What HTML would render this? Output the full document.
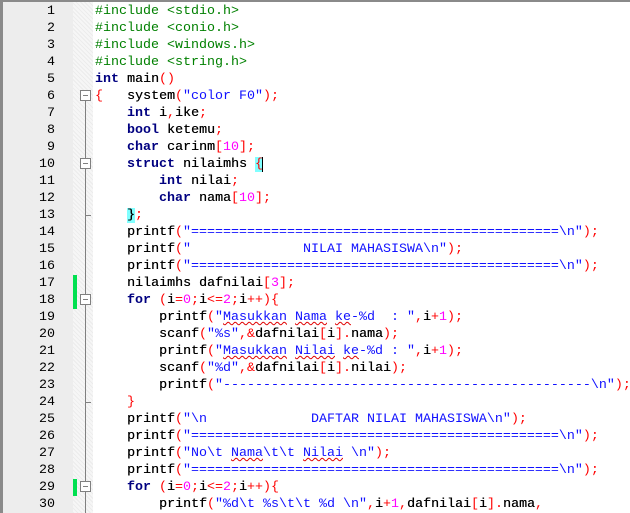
<!DOCTYPE html>
<html><head><meta charset="utf-8"><style>
html,body{margin:0;padding:0;background:#fff;width:630px;height:513px;overflow:hidden;position:relative}
.top{position:absolute;left:0;top:0;width:630px;height:2px;background:#8a8a8a}
.left{position:absolute;left:0;top:0;width:3px;height:513px;background:#8a8a8a}
.num{position:absolute;left:3px;top:2px;width:70px;height:511px;background:#ededed}
.fold{position:absolute;left:73px;top:2px;width:20px;height:511px;background:#f6f6f6;background-image:repeating-linear-gradient(45deg,#ececec 0 1px,transparent 1px 3px)}
pre{margin:0;font-family:"Liberation Mono",monospace;font-size:13.33px;line-height:17px;tab-size:4;-moz-tab-size:4;white-space:pre}
.nums{position:absolute;left:3px;top:3px;width:52px;text-align:right;color:#000}
.code{position:absolute;left:95px;top:3px;color:#000;text-shadow:0.3px 0 0 #000}
.k{color:#000080;font-weight:bold;text-shadow:none}
.s{color:#1010ff;text-shadow:none}
.o{color:#ff0000;text-shadow:none}
.n{color:#ff00ff;text-shadow:none}
.p{color:#008000;text-shadow:none}
.w{text-decoration:underline wavy #e00000;text-decoration-thickness:1px}
.hl{background:#80ffff}
.g{position:absolute;left:73px;width:4px;background:#00e050}
.vl{position:absolute;left:85px;width:1px;background:#808080}
.box{position:absolute;left:80px;width:9px;height:9px;border:1px solid #808080;background:#fff}
.box:after{content:"";position:absolute;left:2px;top:4px;width:5px;height:1px;background:#808080}
.tick{position:absolute;left:85px;width:6px;height:1px;background:#808080}
</style></head><body>
<div class="num"></div><div class="fold"></div>
<div class="top"></div><div class="left"></div>
<div class="g" style="top:275px;height:34px"></div>
<div class="g" style="top:479px;height:17px"></div>
<div class="vl" style="top:91px;height:422px"></div>
<div class="tick" style="top:215px"></div>
<div class="tick" style="top:402px"></div>
<div class="box" style="top:90px"></div>
<div class="box" style="top:158px"></div>
<div class="box" style="top:294px"></div>
<div class="box" style="top:481px"></div>
<pre class="nums">1
2
3
4
5
6
7
8
9
10
11
12
13
14
15
16
17
18
19
20
21
22
23
24
25
26
27
28
29
30</pre>
<pre class="code"><span class="p">#include &lt;stdio.h&gt;</span>
<span class="p">#include &lt;conio.h&gt;</span>
<span class="p">#include &lt;windows.h&gt;</span>
<span class="p">#include &lt;string.h&gt;</span>
<span class="k">int</span> main<span class="o">()</span>
<span class="o">{</span>	system<span class="o">(</span><span class="s">"color F0"</span><span class="o">);</span>
	<span class="k">int</span> i<span class="o">,</span>ike<span class="o">;</span>
	<span class="k">bool</span> ketemu<span class="o">;</span>
	<span class="k">char</span> carinm<span class="o">[</span><span class="n">10</span><span class="o">];</span>
	<span class="k">struct</span> nilaimhs <span class="o hl">{</span><span style="border-left:1px solid #000;margin-left:-1px"></span>
		<span class="k">int</span> nilai<span class="o">;</span>
		<span class="k">char</span> nama<span class="o">[</span><span class="n">10</span><span class="o">];</span>
	<span class="hl">}</span><span class="o">;</span>
	printf<span class="o">(</span><span class="s">"==============================================\n"</span><span class="o">);</span>
	printf<span class="o">(</span><span class="s">"              NILAI MAHASISWA\n"</span><span class="o">);</span>
	printf<span class="o">(</span><span class="s">"==============================================\n"</span><span class="o">);</span>
	nilaimhs dafnilai<span class="o">[</span><span class="n">3</span><span class="o">];</span>
	<span class="k">for</span> <span class="o">(</span>i<span class="o">=</span><span class="n">0</span><span class="o">;</span>i<span class="o">&lt;=</span><span class="n">2</span><span class="o">;</span>i<span class="o">++){</span>
		printf<span class="o">(</span><span class="s">"<span class="w">Masukkan</span> <span class="w">Nama</span> <span class="w">ke</span>-%d  : "</span><span class="o">,</span>i<span class="o">+</span><span class="n">1</span><span class="o">);</span>
		scanf<span class="o">(</span><span class="s">"%s"</span><span class="o">,&amp;</span>dafnilai<span class="o">[</span>i<span class="o">].</span>nama<span class="o">);</span>
		printf<span class="o">(</span><span class="s">"<span class="w">Masukkan</span> <span class="w">Nilai</span> <span class="w">ke</span>-%d : "</span><span class="o">,</span>i<span class="o">+</span><span class="n">1</span><span class="o">);</span>
		scanf<span class="o">(</span><span class="s">"%d"</span><span class="o">,&amp;</span>dafnilai<span class="o">[</span>i<span class="o">].</span>nilai<span class="o">);</span>
		printf<span class="o">(</span><span class="s">"----------------------------------------------\n"</span><span class="o">);</span>
	<span class="o">}</span>
	printf<span class="o">(</span><span class="s">"\n             DAFTAR NILAI MAHASISWA\n"</span><span class="o">);</span>
	printf<span class="o">(</span><span class="s">"==============================================\n"</span><span class="o">);</span>
	printf<span class="o">(</span><span class="s">"No\t <span class="w">Nama</span>\t\t <span class="w">Nilai</span> \n"</span><span class="o">);</span>
	printf<span class="o">(</span><span class="s">"==============================================\n"</span><span class="o">);</span>
	<span class="k">for</span> <span class="o">(</span>i<span class="o">=</span><span class="n">0</span><span class="o">;</span>i<span class="o">&lt;=</span><span class="n">2</span><span class="o">;</span>i<span class="o">++){</span>
		printf<span class="o">(</span><span class="s">"%d\t %s\t\t %d \n"</span><span class="o">,</span>i<span class="o">+</span><span class="n">1</span><span class="o">,</span>dafnilai<span class="o">[</span>i<span class="o">].</span>nama<span class="o">,</span></pre>
</body></html>
